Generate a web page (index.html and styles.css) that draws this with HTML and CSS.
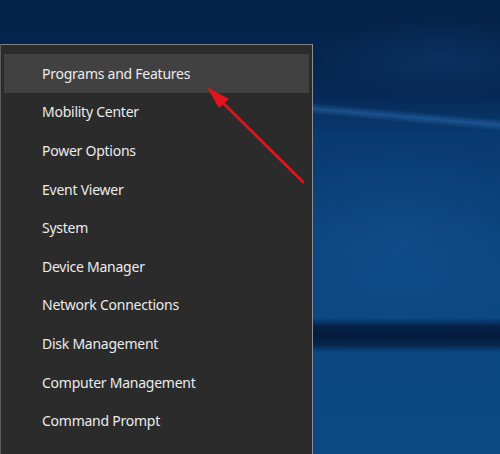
FILE: index.html
```html
<!DOCTYPE html>
<html lang="en">
<head>
<meta charset="utf-8">
<title>Quick Link Menu</title>
<link rel="stylesheet" href="styles.css">
</head>
<body>
<div class="desktop">
  <div class="streak"></div>
  <div class="band"></div>
  <nav class="menu">
    <ul class="menu-list">
      <li class="menu-item active">Programs and Features</li>
      <li class="menu-item">Mobility Center</li>
      <li class="menu-item">Power Options</li>
      <li class="menu-item">Event Viewer</li>
      <li class="menu-item">System</li>
      <li class="menu-item">Device Manager</li>
      <li class="menu-item">Network Connections</li>
      <li class="menu-item">Disk Management</li>
      <li class="menu-item">Computer Management</li>
      <li class="menu-item">Command Prompt</li>
    </ul>
  </nav>
  <svg class="arrow" width="500" height="454" viewBox="0 0 500 454" aria-hidden="true">
    <line x1="303" y1="182" x2="216" y2="96" stroke="#e3141b" stroke-width="2.6" stroke-linecap="round"/>
    <polygon points="207,87 229,99 219,108" fill="#e3141b"/>
  </svg>
</div>
</body>
</html>
```
FILE: styles.css
```css
html, body {
  margin: 0;
  padding: 0;
}
body {
  width: 500px;
  height: 454px;
  overflow: hidden;
  font-family: "Noto Sans", "Open Sans", sans-serif;
}
.desktop {
  position: relative;
  width: 500px;
  height: 454px;
  overflow: hidden;
  background:
    radial-gradient(ellipse 150px 110px at 400px 250px, rgba(30, 95, 165, 0.3), rgba(30, 95, 165, 0) 100%),
    radial-gradient(ellipse 120px 40px at 440px 60px, rgba(20, 70, 130, 0.35), rgba(20, 70, 130, 0) 100%),
    linear-gradient(180deg, #052248 0%, #062854 20%, #093a70 30%, #0b4580 60%, #0b4884 100%);
  padding-top: 44px;
  box-sizing: border-box;
}
.streak {
  position: absolute;
  left: 305px;
  top: 102px;
  width: 230px;
  height: 12px;
  background: linear-gradient(180deg, rgba(50, 120, 195, 0) 0%, rgba(50, 120, 195, 0.45) 50%, rgba(50, 120, 195, 0) 100%);
  transform: rotate(5deg);
  transform-origin: left center;
}
.band {
  position: absolute;
  left: 300px;
  top: 318px;
  width: 200px;
  height: 34px;
  background: linear-gradient(180deg, rgba(4, 28, 60, 0) 0%, rgba(4, 28, 60, 0.85) 25%, #041c3e 55%, rgba(4, 30, 64, 0.8) 80%, rgba(4, 30, 65, 0) 100%);
}
.menu {
  position: relative;
  z-index: 1;
  width: 313px;
  height: 410px;
  box-sizing: border-box;
  background: #2b2b2b;
  border-top: 1px solid #7b7f84;
  border-left: 1px solid #5c5f62;
  border-right: 1px solid #8a8e92;
  padding: 9px 3px 0 3px;
}
.menu-list {
  list-style: none;
  margin: 0;
  padding: 0;
}
.menu-item {
  height: 38.6px;
  display: flex;
  align-items: center;
  padding-left: 38px;
  color: #ececec;
  font-size: 14px;
  letter-spacing: -0.25px;
}
.menu-item.active {
  background: #414141;
}
.arrow {
  position: absolute;
  left: 0;
  top: 0;
  z-index: 2;
}
```
